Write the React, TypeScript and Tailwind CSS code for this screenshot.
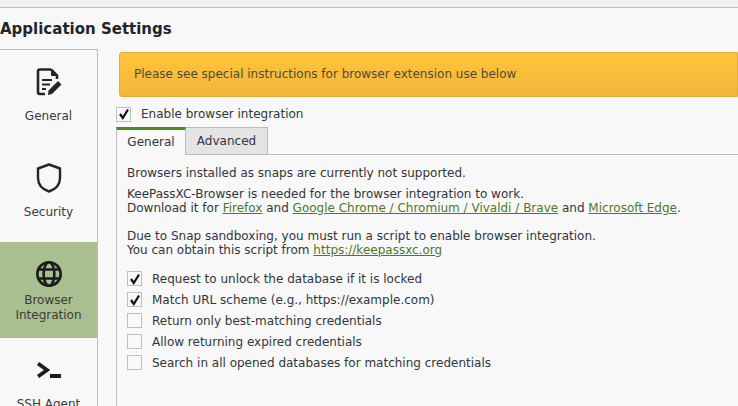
const font = { fontFamily: '"DejaVu Sans", sans-serif' }

function NavItem({
  label,
  icon,
  active,
  height,
}: {
  label: React.ReactNode
  icon: React.ReactNode
  active?: boolean
  height: string
}) {
  return (
    <div
      className={`${height} flex flex-col items-center text-center text-[12px] leading-[15px] text-[#3b3b3b] ${
        active ? "bg-[#a9bf8f]" : ""
      }`}
    >
      {icon}
      {label}
    </div>
  )
}

function Tick() {
  return (
    <svg width="12" height="12" viewBox="0 0 12 12">
      <path d="M2 6 L4.8 10 L10 1.5" fill="none" stroke="#111" strokeWidth="2.2" />
    </svg>
  )
}

function Check({ checked, label }: { checked?: boolean; label: string }) {
  return (
    <div className="h-[21px] flex items-center gap-[10px]">
      <div className="w-[15px] h-[15px] border border-[#bfbfbf] bg-[#f8f8f8] flex items-center justify-center">
        {checked && <Tick />}
      </div>
      <span>{label}</span>
    </div>
  )
}

function A({ children }: { children: React.ReactNode }) {
  return <span className="text-[#4b7b24] underline">{children}</span>
}

export default function App() {
  return (
    <div
      style={font}
      className="w-[738px] h-[406px] overflow-hidden bg-[#f8f8f8] text-[12px] leading-[15px] text-[#31363b]"
    >
      {/* Top strip */}
      <div className="h-[8px] bg-[#eff0f1] border-b border-[#bdbdbd]" />

      {/* Title */}
      <h1 className="h-[41px] pt-[12px] text-[15px] leading-[18px] font-bold text-[#232629]">
        Application Settings
      </h1>

      <div className="flex h-[357px]">
        {/* Sidebar */}
        <div className="w-[98px] shrink-0 border-t border-r border-[#bdbdbd] overflow-hidden">
          <NavItem
            height="h-[96px]"
            label="General"
            icon={
              <svg className="shrink-0 mt-[18px] mb-[13px]" width="26" height="28" viewBox="0 0 26 28">
                <path
                  d="M15 1.5 H4 Q2 1.5 2 3.5 V24 Q2 26 4 26 H9 M15 1.5 L21 7.5 V11"
                  fill="none"
                  stroke="#232629"
                  strokeWidth="2.6"
                />
                <path d="M15 1 L22 8 H15 Z" fill="#232629" />
                <path d="M6 12 H16 M6 16.5 H14 M6 21 H10" stroke="#232629" strokeWidth="2.2" />
                <path d="M12 27 L12.5 22.5 L22 13 L25.5 16.5 L16 26 Z" fill="#232629" />
              </svg>
            }
          />
          <NavItem
            height="h-[96px]"
            label="Security"
            icon={
              <svg className="shrink-0 mt-[17px] mb-[12px]" width="26" height="30" viewBox="0 0 26 30">
                <path
                  d="M13 1.5 L24 5.5 V15 C24 22 19 26.5 13 28.5 C7 26.5 2 22 2 15 V5.5 Z"
                  fill="none"
                  stroke="#232629"
                  strokeWidth="2.4"
                  strokeLinejoin="round"
                />
              </svg>
            }
          />
          <NavItem
            active
            height="h-[96px]"
            label={
              <>
                Browser
                <br />
                Integration
              </>
            }
            icon={
              <svg className="shrink-0 mt-[18px] mb-[5px]" width="28" height="28" viewBox="0 0 28 28">
                <g fill="none" stroke="#1c1c1c" strokeWidth="2.6">
                  <circle cx="14" cy="14" r="11.7" />
                  <ellipse cx="14" cy="14" rx="5.4" ry="11.7" />
                  <path d="M3.5 9.5 H24.5 M3.5 18.5 H24.5" />
                </g>
              </svg>
            }
          />
          <NavItem
            height="h-[80px]"
            label="SSH Agent"
            icon={
              <svg className="shrink-0 mt-[24px] mb-[19px]" width="24" height="16" viewBox="0 0 24 16">
                <path d="M1 1.5 L10 8 L1 14.5" fill="none" stroke="#1c1c1c" strokeWidth="3.8" />
                <path d="M13 14 H24" stroke="#1c1c1c" strokeWidth="4" />
              </svg>
            }
          />
        </div>

        {/* Main */}
        <div className="flex-1 min-w-0 pl-[18px]">
          {/* Warning */}
          <div className="ml-[3px] mt-[3px] h-[45px] flex items-center pl-[14px] border border-[#e0ac36] rounded-l-[3px] bg-gradient-to-b from-[#ffc33c] to-[#f2b73a] text-[#4f4a35]">
            Please see special instructions for browser extension use below
          </div>

          <div className="h-[22px] mt-[6px] mb-[2px] flex items-center gap-[10px]">
            <div className="w-[15px] h-[15px] border border-[#bfbfbf] flex items-center justify-center">
              <Tick />
            </div>
            <span>Enable browser integration</span>
          </div>

          {/* Tabs */}
          <div className="flex h-[28px] items-stretch">
            <div className="w-[70px] border-x border-[#bdbdbd] border-t-[3px] border-t-[#4e8a1f] flex items-center justify-center">
              General
            </div>
            <div className="w-[82px] bg-[#e4e4e4] border-r border-t border-b border-[#bdbdbd] flex items-center justify-center">
              Advanced
            </div>
            <div className="flex-1 border-b border-[#bdbdbd]" />
          </div>

          {/* Tab content */}
          <div className="h-[260px] border-l border-[#bdbdbd] pl-[10px] pt-[11px] leading-[14px]">
            <p>Browsers installed as snaps are currently not supported.</p>
            <p className="mt-[7px]">KeePassXC-Browser is needed for the browser integration to work.</p>
            <p>
              Download it for <A>Firefox</A> and <A>Google Chrome / Chromium / Vivaldi / Brave</A> and{" "}
              <A>Microsoft Edge</A>.
            </p>
            <p className="mt-[14px]">Due to Snap sandboxing, you must run a script to enable browser integration.</p>
            <p>
              You can obtain this script from <A>https://keepassxc.org</A>
            </p>
            <div className="mt-[11px]">
              <Check checked label="Request to unlock the database if it is locked" />
              <Check checked label="Match URL scheme (e.g., https://example.com)" />
              <Check label="Return only best-matching credentials" />
              <Check label="Allow returning expired credentials" />
              <Check label="Search in all opened databases for matching credentials" />
            </div>
          </div>
        </div>
      </div>
    </div>
  )
}
